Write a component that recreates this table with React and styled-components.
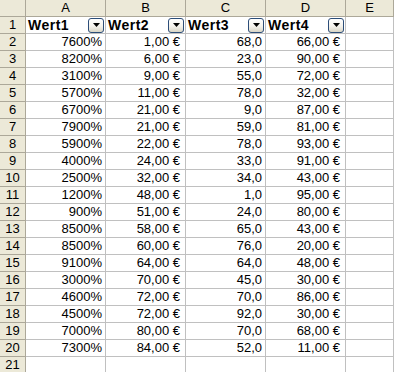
import React from 'react';
import styled, { createGlobalStyle } from 'styled-components';

const Global = createGlobalStyle`
  html, body { margin: 0; padding: 0; background: #fff; }
  body { font-family: "Liberation Sans", Arial, sans-serif; }
`;

const Sheet = styled.div`
  display: grid;
  grid-template-columns: 26px repeat(4, 80px) 1fr;
  grid-auto-rows: 17px;
  width: 394px;
  height: 372px;
  overflow: hidden;
  font-size: 13px;
  color: #000;
`;

const HeadBase = styled.div`
  box-sizing: border-box;
  background: #ece9d8;
  border-right: 1px solid #aca899;
  border-bottom: 1px solid #aca899;
  display: flex;
  align-items: center;
  justify-content: center;
  line-height: 16px;
`;

const Corner = styled(HeadBase)``;
const ColHead = styled(HeadBase)``;
const RowHead = styled(HeadBase)``;

const Cell = styled.div`
  box-sizing: border-box;
  border-right: 1px solid #c0c0c0;
  border-bottom: 1px solid #c0c0c0;
  line-height: 16px;
  text-align: right;
  padding-right: ${p => p.$pad ?? 3}px;
  white-space: nowrap;
  overflow: hidden;
`;

const FilterCell = styled.div`
  box-sizing: border-box;
  border-right: 1px solid #c0c0c0;
  border-bottom: 1px solid #c0c0c0;
  display: flex;
  align-items: center;
  justify-content: space-between;
  padding-left: 2px;
  padding-right: 1px;
  font-weight: bold;
  font-size: 14px;
  letter-spacing: 0.5px;
  line-height: 16px;
  white-space: nowrap;
`;

const FilterButton = styled.span`
  box-sizing: border-box;
  flex: none;
  width: 16px;
  height: 15px;
  border: 1px solid #2c4d78;
  border-radius: 3px;
  background: linear-gradient(#ffffff, #f4f2ec 55%, #d8d5c6);
  display: flex;
  align-items: center;
  justify-content: center;
`;

const Arrow = () => (
  <svg width="7" height="4" viewBox="0 0 7 4">
    <polygon points="0,0 7,0 3.5,4" fill="#000" />
  </svg>
);

const rows = [
  ['7600%', '1,00 €', '68,0', '66,00 €'],
  ['8200%', '6,00 €', '23,0', '90,00 €'],
  ['3100%', '9,00 €', '55,0', '72,00 €'],
  ['5700%', '11,00 €', '78,0', '32,00 €'],
  ['6700%', '21,00 €', '9,0', '87,00 €'],
  ['7900%', '21,00 €', '59,0', '81,00 €'],
  ['5900%', '22,00 €', '78,0', '93,00 €'],
  ['4000%', '24,00 €', '33,0', '91,00 €'],
  ['2500%', '32,00 €', '34,0', '43,00 €'],
  ['1200%', '48,00 €', '1,0', '95,00 €'],
  ['900%', '51,00 €', '24,0', '80,00 €'],
  ['8500%', '58,00 €', '65,0', '43,00 €'],
  ['8500%', '60,00 €', '76,0', '20,00 €'],
  ['9100%', '64,00 €', '64,0', '48,00 €'],
  ['3000%', '70,00 €', '45,0', '30,00 €'],
  ['4600%', '72,00 €', '70,0', '86,00 €'],
  ['4500%', '72,00 €', '92,0', '30,00 €'],
  ['7000%', '80,00 €', '70,0', '68,00 €'],
  ['7300%', '84,00 €', '52,0', '11,00 €'],
];

const pads = [3, 5, 3, 5];

export default function App() {
  return (
    <>
      <Global />
      <Sheet>
        <Corner />
        {['A', 'B', 'C', 'D', 'E'].map(l => (
          <ColHead key={l}>{l}</ColHead>
        ))}
        <RowHead>1</RowHead>
        {['Wert1', 'Wert2', 'Wert3', 'Wert4'].map(h => (
          <FilterCell key={h}>
            <span>{h}</span>
            <FilterButton><Arrow /></FilterButton>
          </FilterCell>
        ))}
        <Cell />
        {rows.map((r, i) => (
          <React.Fragment key={i}>
            <RowHead>{i + 2}</RowHead>
            {r.map((v, j) => (
              <Cell key={j} $pad={pads[j]}>{v}</Cell>
            ))}
            <Cell />
          </React.Fragment>
        ))}
        <RowHead>21</RowHead>
        <Cell /><Cell /><Cell /><Cell /><Cell />
      </Sheet>
    </>
  );
}
